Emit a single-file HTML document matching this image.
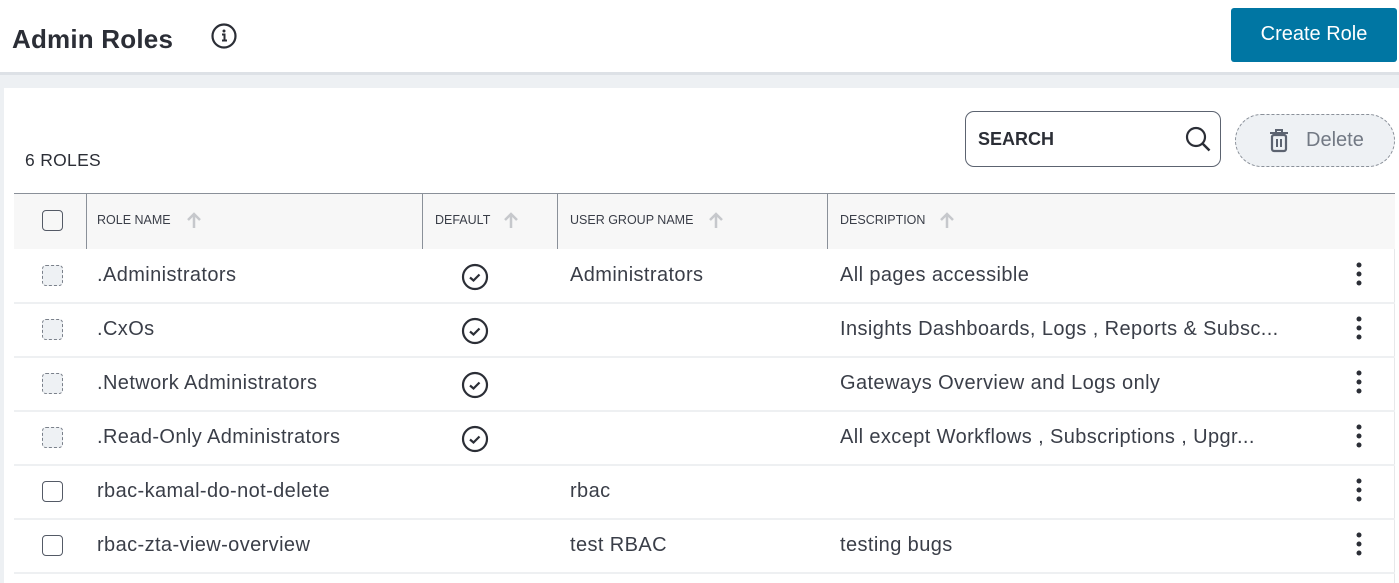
<!DOCTYPE html>
<html><head><style>
*{margin:0;padding:0;box-sizing:border-box}
body{width:1399px;height:583px;overflow:hidden;background:#fff;font-family:"Liberation Sans",sans-serif;color:#2b2e36;position:relative}
.abs{position:absolute}
.hdr{left:0;top:0;width:1399px;height:75px;background:#fff;border-bottom:3px solid #dde1e6}
.band{left:0;top:75px;width:1399px;height:508px;background:#edf0f3}
.card{left:4px;top:88px;width:1395px;height:495px;background:#fff}
.title{left:12px;top:24px;font-size:26px;font-weight:bold;color:#2b2e36;letter-spacing:0.2px}
.btn{left:1231px;top:8px;width:166px;height:54px;background:#0076a3;border-radius:3px;color:#fff;font-size:20px;text-align:center;line-height:52px}
.search{left:965px;top:111px;width:256px;height:56px;border:1px solid #5c6370;border-radius:9px;font-size:18px;font-weight:bold;line-height:54px;padding-left:12px}
.del{left:1235px;top:114px;width:160px;height:53px;border:1px dashed #8a9099;border-radius:27px;background:#eef1f4;color:#727984;font-size:20px;line-height:51px;padding-left:70px}
.roles{left:25px;top:150px;font-size:17.5px;letter-spacing:0.3px}
.th{left:14px;top:193px;width:1381px;height:56px;background:#f7f7f7;border-top:1px solid #8a9099}
.vl{top:194px;width:1px;height:55px;background:#8a9099}
.hl{top:213px;font-size:12.5px;color:#3a3e48}
.row{left:14px;width:1381px;height:2px;background:#eef0f2}
.cell{font-size:20px;color:#3a3e48;letter-spacing:0.4px}
.cb{left:42px;width:21px;height:21px;border:1.5px solid #545a66;border-radius:4px}
.cbd{left:42px;width:21px;height:21px;border:1px dashed #7a808a;border-radius:4px;background:#eef1f4}
.rb{left:1394px;top:249px;width:1px;height:334px;background:#e6e8ea}
</style></head><body>
<div class="abs hdr"></div>
<div class="abs title">Admin Roles</div>
<svg class="abs" style="left:210px;top:22px" width="28" height="28" viewBox="0 0 28 28"><circle cx="14" cy="14" r="11.5" fill="none" stroke="#2b2e36" stroke-width="2.2"/><circle cx="14" cy="9" r="1.5" fill="#2b2e36"/><path d="M12 12.5h2.5v6M12 18.5h5" stroke="#2b2e36" stroke-width="2" fill="none"/></svg>
<div class="abs btn">Create Role</div>
<div class="abs band"></div>
<div class="abs card"></div>
<div class="abs search">SEARCH</div>
<svg class="abs" style="left:1183px;top:124px" width="30" height="30" viewBox="0 0 30 30"><circle cx="13" cy="13" r="9" fill="none" stroke="#2b2e36" stroke-width="2.2"/><path d="M19.5 19.5l7 7" stroke="#2b2e36" stroke-width="2.5"/></svg>
<div class="abs del">Delete</div>
<svg class="abs" style="left:1268px;top:128px" width="22" height="25" viewBox="0 0 22 25"><path d="M2 5h18M8 5V2h6v3" stroke="#5c6370" stroke-width="2" fill="none"/><rect x="4" y="7" width="14" height="16" rx="2" fill="none" stroke="#5c6370" stroke-width="2.2"/><path d="M9 11v8M13 11v8" stroke="#5c6370" stroke-width="2"/></svg>
<div class="abs roles">6 ROLES</div>
<div class="abs th"></div>
<div class="abs vl" style="left:86px"></div>
<div class="abs vl" style="left:422px"></div>
<div class="abs vl" style="left:557px"></div>
<div class="abs vl" style="left:827px"></div>
<div class="abs cb" style="top:210px"></div>
<div class="abs hl" style="left:97px">ROLE NAME</div>
<div class="abs hl" style="left:435px">DEFAULT</div>
<div class="abs hl" style="left:570px">USER GROUP NAME</div>
<div class="abs hl" style="left:840px">DESCRIPTION</div>
<svg class="abs" style="left:0;top:211px" width="1000" height="20" viewBox="0 0 1000 20">
<g stroke="#c6c8cc" stroke-width="2.5" fill="none">
<path d="M194 17V3M188 9l6-6 6 6"/>
<path d="M511 17V3M505 9l6-6 6 6"/>
<path d="M716 17V3M710 9l6-6 6 6"/>
<path d="M947 17V3M941 9l6-6 6 6"/>
</g></svg>
<div class="abs rb"></div>

<div class="abs row" style="top:302px"></div>
<div class="abs row" style="top:356px"></div>
<div class="abs row" style="top:410px"></div>
<div class="abs row" style="top:464px"></div>
<div class="abs row" style="top:518px"></div>
<div class="abs row" style="top:572px"></div>

<div class="abs cbd" style="top:265px"></div>
<div class="abs cbd" style="top:319px"></div>
<div class="abs cbd" style="top:373px"></div>
<div class="abs cbd" style="top:427px"></div>
<div class="abs cb" style="top:481px"></div>
<div class="abs cb" style="top:535px"></div>

<div class="abs cell" style="left:97px;top:264px">.Administrators</div>
<div class="abs cell" style="left:97px;top:318px">.CxOs</div>
<div class="abs cell" style="left:97px;top:372px">.Network Administrators</div>
<div class="abs cell" style="left:97px;top:426px">.Read-Only Administrators</div>
<div class="abs cell" style="left:97px;top:480px">rbac-kamal-do-not-delete</div>
<div class="abs cell" style="left:97px;top:534px">rbac-zta-view-overview</div>

<div class="abs cell" style="left:570px;top:264px">Administrators</div>
<div class="abs cell" style="left:570px;top:480px">rbac</div>
<div class="abs cell" style="left:570px;top:534px">test RBAC</div>

<div class="abs cell" style="left:840px;top:264px">All pages accessible</div>
<div class="abs cell" style="left:840px;top:318px">Insights Dashboards, Logs , Reports &amp; Subsc...</div>
<div class="abs cell" style="left:840px;top:372px">Gateways Overview and Logs only</div>
<div class="abs cell" style="left:840px;top:426px">All except Workflows , Subscriptions , Upgr...</div>
<div class="abs cell" style="left:840px;top:534px">testing bugs</div>

<svg class="abs" style="left:461px;top:263px" width="28" height="230" viewBox="0 0 28 230">
<g fill="none" stroke="#2b2e36" stroke-width="2.2">
<circle cx="14" cy="14" r="12"/><path d="M9 14.5l3.5 3 6-6"/>
<circle cx="14" cy="68" r="12"/><path d="M9 68.5l3.5 3 6-6"/>
<circle cx="14" cy="122" r="12"/><path d="M9 122.5l3.5 3 6-6"/>
<circle cx="14" cy="176" r="12"/><path d="M9 176.5l3.5 3 6-6"/>
</g></svg>

<svg class="abs" style="left:1354px;top:262px" width="10" height="300" viewBox="0 0 10 300">
<g fill="#2b2e36">
<circle cx="5" cy="3" r="2.5"/><circle cx="5" cy="12" r="2.5"/><circle cx="5" cy="21" r="2.5"/>
<circle cx="5" cy="57" r="2.5"/><circle cx="5" cy="66" r="2.5"/><circle cx="5" cy="75" r="2.5"/>
<circle cx="5" cy="111" r="2.5"/><circle cx="5" cy="120" r="2.5"/><circle cx="5" cy="129" r="2.5"/>
<circle cx="5" cy="165" r="2.5"/><circle cx="5" cy="174" r="2.5"/><circle cx="5" cy="183" r="2.5"/>
<circle cx="5" cy="219" r="2.5"/><circle cx="5" cy="228" r="2.5"/><circle cx="5" cy="237" r="2.5"/>
<circle cx="5" cy="273" r="2.5"/><circle cx="5" cy="282" r="2.5"/><circle cx="5" cy="291" r="2.5"/>
</g></svg>
</body></html>
